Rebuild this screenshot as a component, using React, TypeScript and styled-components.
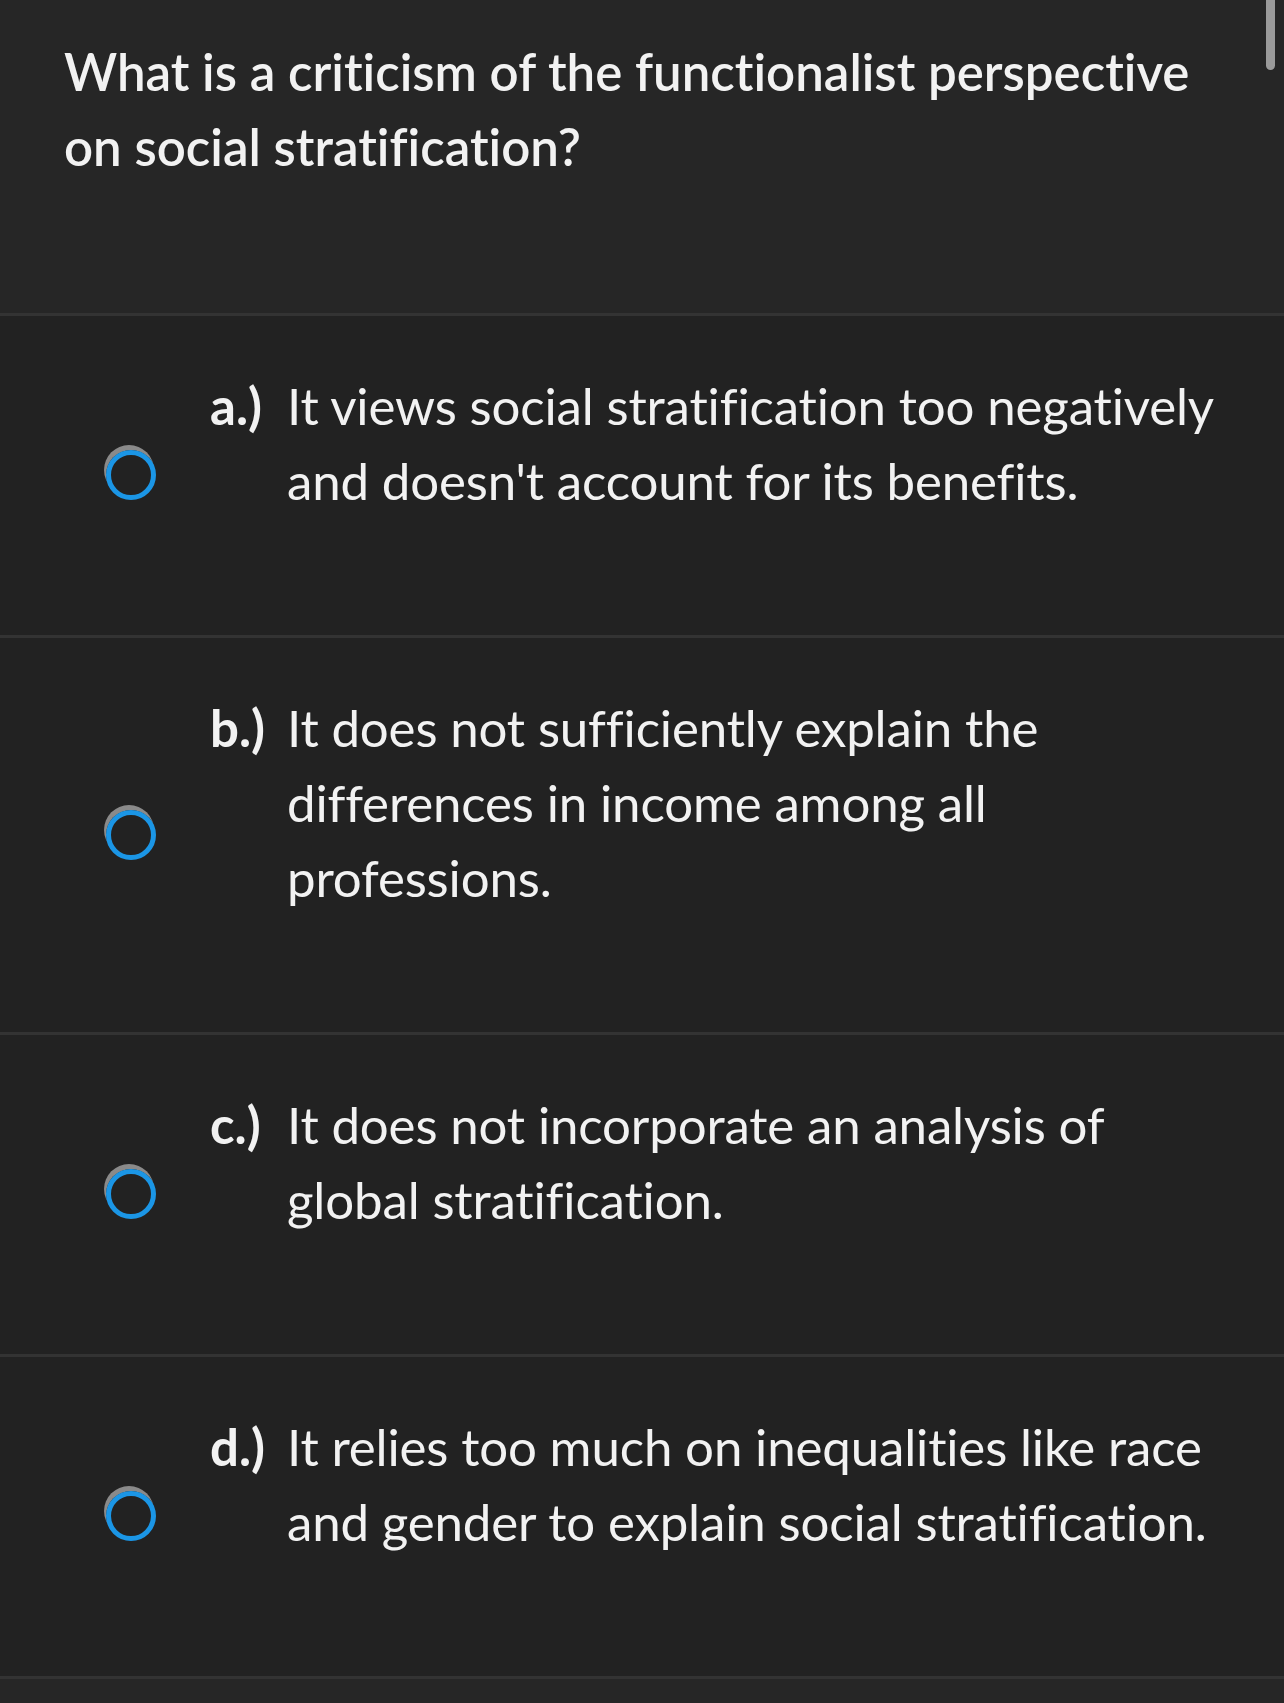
import * as React from 'react'
import styled, { createGlobalStyle } from 'styled-components'

const options = [
  {
    letter: 'a.)',
    lines: ['It views social stratification too negatively', "and doesn't account for its benefits."],
  },
  {
    letter: 'b.)',
    lines: ['It does not sufficiently explain the', 'differences in income among all', 'professions.'],
  },
  {
    letter: 'c.)',
    lines: ['It does not incorporate an analysis of', 'global stratification.'],
  },
  {
    letter: 'd.)',
    lines: ['It relies too much on inequalities like race', 'and gender to explain social stratification.'],
  },
]

const App = () => {
  return (
    <>
      <GlobalStyle />
      <Page>
        <ScrollThumb />
        <Question>
          <QuestionText>
            What is a criticism of the functionalist perspective
            <br />
            on social stratification?
          </QuestionText>
        </Question>
        <Divider />
        {options.map((o) => (
          <React.Fragment key={o.letter}>
            <Option>
              <Radio />
              <Letter>{o.letter}</Letter>
              <Answer>
                {o.lines.map((l) => (
                  <Line key={l}>{l}</Line>
                ))}
              </Answer>
            </Option>
            <Divider />
          </React.Fragment>
        ))}
      </Page>
    </>
  )
}

export default App

// Styles

const GlobalStyle = createGlobalStyle`
  html, body {
    margin: 0;
    padding: 0;
    background: #262626;
  }
  body {
    font-family: Lato, "Open Sans", sans-serif;
    font-variant-ligatures: none;
    color: #f2f2f2;
  }
`

const Page = styled.div`
  position: relative;
  width: 1284px;
  min-height: 1703px;
  background: #262626;
`

const ScrollThumb = styled.div`
  position: absolute;
  top: 0;
  left: 1266px;
  width: 9px;
  height: 70px;
  border-radius: 0 0 5px 5px;
  background: #9a9a9a;
`

const Question = styled.div`
  height: 313px;
  box-sizing: border-box;
  padding: 34px 0 0 64px;
`

const QuestionText = styled.h1`
  margin: 0;
  font-size: 51px;
  line-height: 75px;
  font-weight: 600;
`

const Divider = styled.div`
  height: 3px;
  background: #333333;
`

const Option = styled.div`
  display: flex;
  align-items: center;
  padding: 52px 0 53px 106px;
  background: #222222;
`

const Radio = styled.div`
  flex: none;
  width: 50px;
  height: 50px;
  box-sizing: border-box;
  border: 5px solid #1b96e6;
  border-radius: 50%;
  box-shadow: -2px -5px 0 #8a8a8a;
  margin-right: 54px;
`

const Letter = styled.div`
  flex: none;
  align-self: flex-start;
  width: 77px;
  font-size: 51px;
  line-height: 75px;
  font-weight: 700;
`

const Answer = styled.div`
  padding-bottom: 64px;
`

const Line = styled.div`
  font-size: 51px;
  line-height: 75px;
  font-weight: 400;
  letter-spacing: -0.15px;
  white-space: nowrap;
`
